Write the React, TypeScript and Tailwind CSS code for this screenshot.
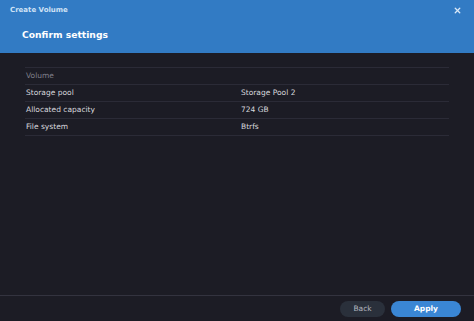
import { X } from 'lucide-react';

const rows = [
  { label: 'Storage pool', value: 'Storage Pool 2' },
  { label: 'Allocated capacity', value: '724 GB' },
  { label: 'File system', value: 'Btrfs' },
];

export default function App() {
  return (
    <div
      className="w-[474px] h-[321px] flex flex-col bg-[#1c1c25] overflow-hidden"
      style={{ fontFamily: '"DejaVu Sans", Verdana, sans-serif' }}
    >
      <div className="h-[53px] bg-[#327bc4] flex flex-col shrink-0">
        <div className="h-[20px] flex items-center justify-between pl-[10px] pr-[12px]">
          <span className="text-[7px] font-bold text-[#cfe2f6] leading-none">Create Volume</span>
          <X size={9} strokeWidth={3.5} className="text-[#dbe9f8]" />
        </div>
        <div className="pl-[22px] pt-[10px]">
          <span className="block text-[9.2px] font-bold text-white leading-none">Confirm settings</span>
        </div>
      </div>

      <div className="flex-1 px-[25px] pt-[14px]">
        <div className="border-t border-[#2b2b37]">
          <div className="h-[17px] flex items-center border-b border-[#2b2b37] pl-[1px]">
            <span className="text-[7.5px] text-[#80808c]">Volume</span>
          </div>
          {rows.map((r) => (
            <div key={r.label} className="h-[17px] flex items-center border-b border-[#2b2b37] pl-[1px]">
              <span className="w-[215px] text-[7.5px] text-[#d8d8de]">{r.label}</span>
              <span className="text-[7.5px] text-[#d8d8de]">{r.value}</span>
            </div>
          ))}
        </div>
      </div>

      <div className="h-[26px] border-t border-[#33333f] flex items-center justify-end gap-[6px] pr-[13px] shrink-0">
        <button className="w-[45px] h-[16px] rounded-full bg-[#2a303b] text-[7.5px] text-[#b4b8c0] leading-none">
          Back
        </button>
        <button className="w-[70px] h-[16px] rounded-full bg-[#3a86d4] text-[7.5px] font-bold text-white leading-none">
          Apply
        </button>
      </div>
    </div>
  );
}
